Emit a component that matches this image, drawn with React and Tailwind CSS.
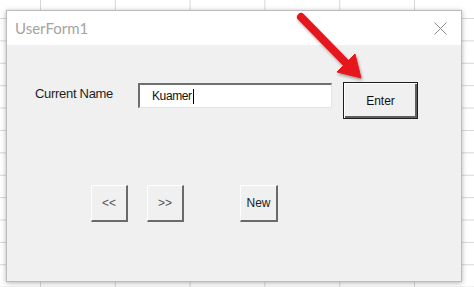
export default function App() {
  return (
    <div
      className="relative w-[474px] h-[287px] overflow-hidden bg-white pt-[10px] pl-[6px] bg-[linear-gradient(to_right,#d6d6d6_1px,transparent_1px),linear-gradient(to_bottom,#d6d6d6_1px,transparent_1px)] bg-[size:74.8px_22.4px] bg-[position:40px_18px]"
      style={{ fontFamily: '"Liberation Sans", Arial, sans-serif' }}
    >
      {/* Dialog window */}
      <div className="w-[456px] h-[272px] border border-[#bcbcbc] bg-[#f0f0f0] shadow-[0_1px_5px_rgba(0,0,0,0.3)] flex flex-col">
        {/* Title bar */}
        <div className="h-[34px] bg-white flex items-center justify-between pl-[8px] pr-[14px]">
          <span className="text-[15px] text-[#a3a3a3] font-['Lato',sans-serif]">UserForm1</span>
          <svg width="13" height="13" viewBox="0 0 13 13">
            <path d="M0.5 0.5 L12.5 12.5 M12.5 0.5 L0.5 12.5" stroke="#8a8a8a" strokeWidth="1" />
          </svg>
        </div>

        {/* Body */}
        <div className="flex-1 flex flex-col">
          <div className="flex items-start mt-[37px] pl-[28px]">
            <div className="w-[103px] pt-[2px] text-[13px] text-[#1e1e1e] tracking-[-0.3px]">Current Name</div>
            <div className="mt-[1px] w-[194px] h-[25px] bg-white border-t-2 border-l-2 border-[#6f6f6f] border-r border-b border-r-[#e4e4e4] border-b-[#e4e4e4] flex items-center pl-[12px]">
              <span className="text-[12px] text-[#111] tracking-[-0.4px]">Kuamer</span>
              <span className="w-px h-[15px] bg-black ml-[1px]" />
            </div>
            <button className="ml-[11px] w-[75px] h-[37px] bg-[#f0f0f0] border border-[#1c1c1c] shadow-[inset_1px_1px_0_#ffffff,inset_-2px_-2px_0_#5f5f5f] text-[12px] text-[#111] flex items-center justify-center">
              Enter
            </button>
          </div>

          <div className="flex items-start mt-[66px] pl-[84px]">
            <button className="w-[37px] h-[37px] bg-[#f0f0f0] border-t border-l border-white border-r-2 border-b-2 border-r-[#6a6a6a] border-b-[#6a6a6a] text-[12px] text-[#555] flex items-center justify-center">
              &lt;&lt;
            </button>
            <button className="ml-[19px] w-[37px] h-[37px] bg-[#f0f0f0] border-t border-l border-white border-r-2 border-b-2 border-r-[#6a6a6a] border-b-[#6a6a6a] text-[12px] text-[#555] flex items-center justify-center">
              &gt;&gt;
            </button>
            <button className="ml-[56px] w-[38px] h-[37px] bg-[#f0f0f0] border-t border-l border-white border-r-2 border-b-2 border-r-[#6a6a6a] border-b-[#6a6a6a] text-[12px] text-[#222] flex items-center justify-center">
              New
            </button>
          </div>
        </div>
      </div>

      {/* Red annotation arrow */}
      <svg className="absolute left-0 top-0 pointer-events-none" width="474" height="287" viewBox="0 0 474 287">
        <defs>
          <filter id="sh" x="-20%" y="-20%" width="140%" height="140%">
            <feDropShadow dx="1" dy="2" stdDeviation="1.5" floodColor="#000" floodOpacity="0.35" />
          </filter>
        </defs>
        <g filter="url(#sh)" fill="#e5141b" stroke="#e5141b">
          <path d="M301 17 L347 64" strokeWidth="8" strokeLinecap="round" fill="none" />
          <polygon points="361,78 337,72 355,54" strokeWidth="1" strokeLinejoin="round" />
        </g>
      </svg>
    </div>
  );
}
